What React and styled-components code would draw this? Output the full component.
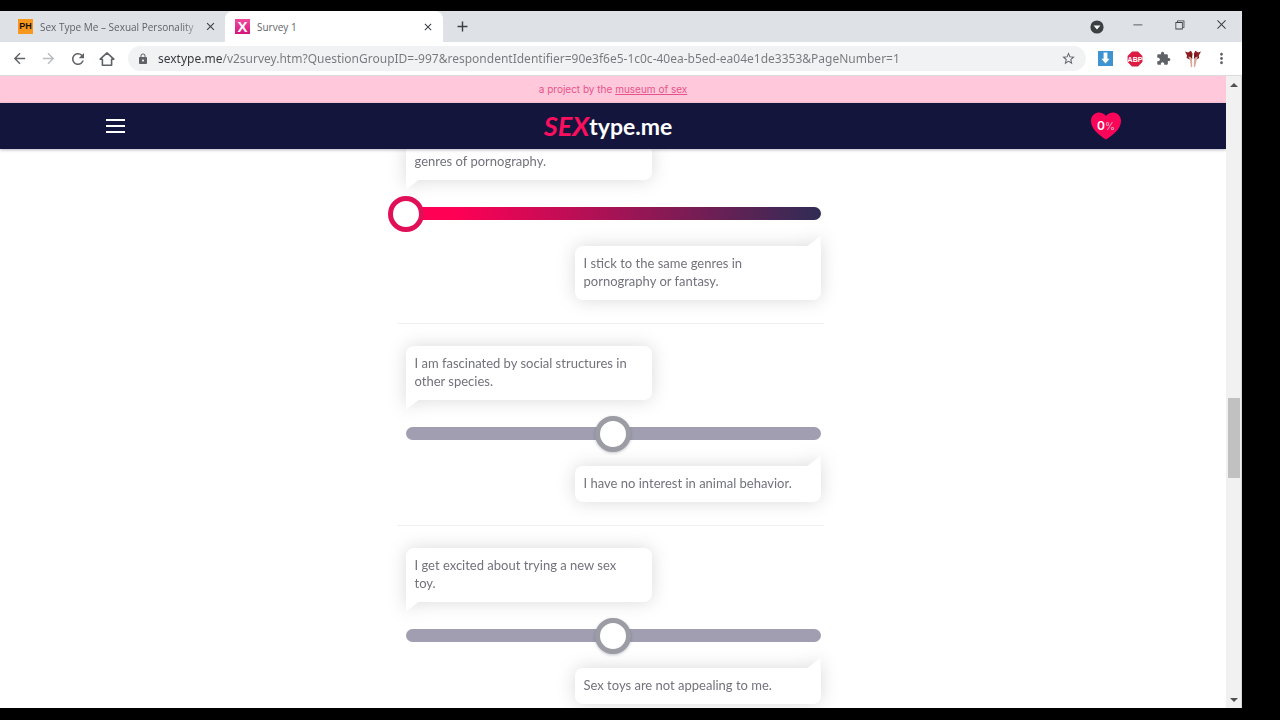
import { useState } from "react";

import styled, { createGlobalStyle } from "styled-components";

import {
    MdAdd,
    MdArrowBack,
    MdArrowForward,
    MdClose,
    MdExtension,
    MdLock,
    MdMoreVert,
    MdRefresh,
    MdStarBorder,
} from "react-icons/md";
import { VscChromeClose, VscChromeMinimize, VscChromeRestore } from "react-icons/vsc";

const pageUrl = "sextype.me/v2survey.htm?QuestionGroupID=-997&respondentIdentifier=90e3f6e5-1c0c-40ea-b5ed-ea04e1de3353&PageNumber=1";

const questions = [
    {
        id: "genres",
        left: "genres of pornography.",
        right: "I stick to the same genres in pornography or fantasy.",
        value: 0,
        answered: true,
    },
    {
        id: "species",
        left: "I am fascinated by social structures in other species.",
        right: "I have no interest in animal behavior.",
        value: 50,
        answered: false,
    },
    {
        id: "toys",
        left: "I get excited about trying a new sex toy.",
        right: "Sex toys are not appealing to me.",
        value: 50,
        answered: false,
    },
];

const HomeIcon = () => (
    <svg width="16" height="16" viewBox="0 0 16 16" fill="none" stroke="#5f6368" strokeWidth="1.6">
        <path d="M1.2 8.2 8 1.8l6.8 6.4H12.6v6H3.4v-6z" strokeLinejoin="round" />
    </svg>
);

const AccountIcon = () => (
    <svg width="14" height="14" viewBox="0 0 14 14">
        <circle cx="7" cy="7" r="6.6" fill="#3c4043" />
        <path d="M3.6 5.4h6.8L7 9.4z" fill="#fff" />
    </svg>
);

const DownloadIcon = () => (
    <svg width="15" height="15" viewBox="0 0 15 15">
        <rect width="15" height="15" fill="#3d94d1" />
        <path d="M5.6 1.5h3.8v6.3h2.2L7.5 12.6 3.4 7.8h2.2z" fill="#fff" />
    </svg>
);

const AdblockIcon = () => (
    <svg width="16" height="16" viewBox="0 0 16 16">
        <path d="M5 .6h6L15.4 5v6L11 15.4H5L.6 11V5z" fill="#dc1b43" />
        <text x="8" y="10.6" textAnchor="middle" fontFamily="Liberation Sans, sans-serif" fontSize="7" fontWeight="700" fill="#fff">ABP</text>
    </svg>
);

const AvatarIcon = () => (
    <svg width="18" height="18" viewBox="0 0 18 18">
        <path d="M1 1.4 4 2.6 7 .8l1.6 3-.6 4-2 1.6L2.6 8 3 5.4z" fill="#8c1d22" />
        <path d="M17 1.6 14 2.4 11.4.8 9.8 3.8l.6 4 2 1.8L15.2 8l-.4-2.6z" fill="#8c1d22" />
        <path d="M4.4 6.6 8 7.6l.2 9.6-1.4-.2-.6-6z" fill="#dba79c" />
        <path d="M13.8 6.6 10.2 7.6l-.4 9 1.2.6 1.4-6z" fill="#dba79c" />
        <path d="M6.6 4.6 8 8.4M11.6 4.6l-1.2 3.8" stroke="#4d1013" />
    </svg>
);

const MenuIcon = () => (
    <svg width="19" height="14" viewBox="0 0 19 14" fill="#fff">
        <rect width="19" height="2" y="0" />
        <rect width="19" height="2" y="6" />
        <rect width="19" height="2" y="12" />
    </svg>
);

const HeartShape = () => (
    <svg width="30" height="28" viewBox="0 0 30 28">
        <path d="M15 27.6C8.500 23.400 0 17.500 0 8.800 0 4 3.400.4 7.800.4c3 0 5.600 1.400 7.200 3.600C16.600 1.800 19.200.4 22.200.4 26.600.4 30 4 30 8.800c0 8.700-8.500 14.600-15 18.800z" fill="#fa0558" />
    </svg>
);

const Question = ({ question }) => {
    const [value, setValue] = useState(question.value);
    const [answered, setAnswered] = useState(question.answered);

    const handleChange = (e) => {
        setValue(Number(e.target.value));
        setAnswered(true);
    };

    return (
        <QuestionItem>
            <Bubble htmlFor={question.id}>{question.left}</Bubble>
            <Track $answered={answered}>
                <Slider
                    id={question.id}
                    type="range"
                    min="0"
                    max="100"
                    value={value}
                    onChange={handleChange}
                    $answered={answered}
                />
            </Track>
            <Bubble htmlFor={question.id} $right>{question.right}</Bubble>
        </QuestionItem>
    );
};

const App = () => {
    const [url, setUrl] = useState(pageUrl);

    return (
        <Desktop>
            <GlobalStyle />
            <Window>
                <TabStrip>
                    <Tab>
                        <Favicon>PH</Favicon>
                        <TabTitle>Sex Type Me – Sexual Personality</TabTitle>
                        <TabButton aria-label="Close tab"><MdClose size={13} /></TabButton>
                    </Tab>
                    <Tab $active>
                        <Favicon $pink>X</Favicon>
                        <TabTitle $active>Survey 1</TabTitle>
                        <TabButton aria-label="Close tab"><MdClose size={12} /></TabButton>
                    </Tab>
                    <NewTab aria-label="New tab"><MdAdd size={17} /></NewTab>
                    <WindowControls>
                        <AccountButton aria-label="Account"><AccountIcon /></AccountButton>
                        <WindowButton aria-label="Minimize"><VscChromeMinimize size={13} /></WindowButton>
                        <WindowButton aria-label="Restore"><VscChromeRestore size={13} /></WindowButton>
                        <WindowButton aria-label="Close"><VscChromeClose size={13} /></WindowButton>
                    </WindowControls>
                </TabStrip>
                <Toolbar>
                    <ToolButton aria-label="Back"><MdArrowBack size={17} /></ToolButton>
                    <ToolButton aria-label="Forward" disabled><MdArrowForward size={17} /></ToolButton>
                    <ToolButton aria-label="Reload"><MdRefresh size={18} /></ToolButton>
                    <ToolButton aria-label="Home"><HomeIcon /></ToolButton>
                    <AddressBar>
                        <MdLock size={12} />
                        <AddressInput
                            aria-label="Address"
                            spellCheck="false"
                            value={url}
                            onChange={(e) => setUrl(e.target.value)}
                        />
                        <ToolButton aria-label="Bookmark"><MdStarBorder size={15} /></ToolButton>
                    </AddressBar>
                    <ToolButton aria-label="Download"><DownloadIcon /></ToolButton>
                    <ToolButton aria-label="Adblock"><AdblockIcon /></ToolButton>
                    <ToolButton aria-label="Extensions"><MdExtension size={15} /></ToolButton>
                    <ToolButton aria-label="Profile"><AvatarIcon /></ToolButton>
                    <ToolButton aria-label="Menu"><MdMoreVert size={17} /></ToolButton>
                </Toolbar>
                <Viewport>
                    <Page>
                        <Banner>
                            a project by the <a href="#museum">museum of sex</a>
                        </Banner>
                        <Header>
                            <MenuButton aria-label="Open menu"><MenuIcon /></MenuButton>
                            <Logo href="#home"><LogoAccent>SEX</LogoAccent>type.me</Logo>
                            <Progress>
                                <HeartShape />
                                <ProgressText>0<small>%</small></ProgressText>
                            </Progress>
                        </Header>
                        <Survey>
                            {questions.map((q) => (
                                <Question key={q.id} question={q} />
                            ))}
                        </Survey>
                    </Page>
                    <Scrollbar>
                        <ScrollArrow aria-label="Scroll up" />
                        <ScrollSpace $grow={305} />
                        <ScrollThumb $grow={80} />
                        <ScrollSpace $grow={213} />
                        <ScrollArrow aria-label="Scroll down" $down />
                    </Scrollbar>
                </Viewport>
            </Window>
        </Desktop>
    );
};

export default App;

const GlobalStyle = createGlobalStyle`
* {
    box-sizing: border-box;
}
body {
    margin: 0;
    background: #000;
    font-family: "Open Sans", "Noto Sans", sans-serif;
}
button {
    display: flex;
    align-items: center;
    justify-content: center;
    padding: 0;
    border: none;
    background: none;
    color: inherit;
    cursor: pointer;
}
svg {
    display: block;
    flex: none;
}
`

const Desktop = styled.div`
height: 100vh;
padding: 11px 38px 12px 0;
background: #000;
`

const Window = styled.div`
display: flex;
flex-direction: column;
height: 100%;
overflow: hidden;
background: #fff;
`

const TabStrip = styled.div`
display: flex;
flex: none;
height: 31px;
background: #dee1e5;
color: #3c4043;
`

const Tab = styled.div`
display: flex;
align-items: center;
width: ${(props) => (props.$active ? "218px" : "225px")};
padding: 0 8px 0 ${(props) => (props.$active ? "10px" : "18px")};
border-radius: 8px 8px 0 0;
background: ${(props) => (props.$active ? "#fff" : "transparent")};
`

const Favicon = styled.span`
flex: none;
width: 15px;
height: 15px;
margin-right: 7px;
background: ${(props) => (props.$pink ? "linear-gradient(#f04c9c, #d4147c)" : "#f7971d")};
color: ${(props) => (props.$pink ? "#fff" : "#1c1208")};
font-family: "Liberation Sans", sans-serif;
font-size: ${(props) => (props.$pink ? "15px" : "9px")};
font-weight: 700;
line-height: 15px;
text-align: center;
`

const TabTitle = styled.span`
flex: 1;
overflow: hidden;
color: #5f6368;
font-size: 10px;
white-space: nowrap;
mask-image: ${(props) => (props.$active ? "none" : "linear-gradient(to right, #000 88%, transparent)")};
`

const TabButton = styled.button`
flex: none;
width: 14px;
height: 14px;
`

const NewTab = styled.button`
width: 38px;
`

const WindowControls = styled.div`
display: flex;
height: 27px;
margin-left: auto;
`

const AccountButton = styled.button`
width: 38px;
height: 31px;
`

const WindowButton = styled.button`
width: 42px;
`

const Toolbar = styled.div`
display: flex;
flex: none;
align-items: center;
height: 34px;
padding: 0 6px 0 5px;
border-bottom: 1px solid #dcd9dc;
background: #fff;
`

const ToolButton = styled.button`
flex: none;
width: 29px;
height: 25px;
color: #5f6368;
&:disabled{
    color: #b9bcc0;
}
`

const AddressBar = styled.div`
display: flex;
flex: 1;
align-items: center;
height: 25px;
margin: 0 5px 0 7px;
padding: 0 3px 0 9px;
border-radius: 13px;
background: #f0f2f4;
color: #5f6368;
`

/* host name is darker than the rest of the address */
const AddressInput = styled.input`
flex: 1;
min-width: 0;
margin-left: 9px;
padding: 0;
border: none;
outline: none;
background: linear-gradient(to right, #34363a 64px, #75787c 64px);
background-clip: text;
color: transparent;
caret-color: #34363a;
font-family: "Noto Sans", "Open Sans", sans-serif;
font-size: 12px;
line-height: 20px;
`

const Viewport = styled.div`
display: flex;
flex: 1;
min-height: 0;
`

const Page = styled.main`
flex: 1;
overflow: hidden;
background: #fff;
font-family: Lato, Inter, sans-serif;
`

const Banner = styled.div`
position: relative;
z-index: 1;
height: 27px;
background: #ffc9db;
color: #e8528a;
font-family: Inter, sans-serif;
font-size: 10px;
line-height: 26px;
text-align: center;
a{
    color: inherit;
}
`

const Header = styled.header`
position: relative;
z-index: 1;
display: flex;
align-items: center;
justify-content: space-between;
height: 46px;
padding: 0 105px 0 106px;
background: #14153d;
box-shadow: 0 1px 3px rgba(20, 21, 61, 0.3);
`

const MenuButton = styled.button`
width: 19px;
height: 20px;
`

const Logo = styled.a`
display: flex;
align-items: center;
color: #fff;
font-family: Lato, sans-serif;
font-size: 23px;
font-weight: 700;
line-height: 28px;
text-decoration: none;
`

const LogoAccent = styled.span`
color: #fa0f5f;
font-size: 27px;
font-style: italic;
`

const Progress = styled.div`
position: relative;
`

const ProgressText = styled.span`
position: absolute;
inset: 0;
color: #fff;
font-family: Inter, sans-serif;
font-size: 12px;
font-weight: 600;
line-height: 28px;
text-align: center;
small{
    color: #d9a3bd;
    font-size: 10px;
}
`

const Survey = styled.div`
width: 415px;
max-width: 100%;
margin: -27px auto 0;
`

const QuestionItem = styled.section`
display: flex;
flex-direction: column;
align-items: flex-start;
margin: 0 -3px 0 -9px;
padding: 22px 3px 23px 9px;
border-bottom: 1px solid #f0f0f2;
`

const Bubble = styled.label`
position: relative;
align-self: ${(props) => (props.$right ? "flex-end" : "flex-start")};
width: 246px;
padding: 8px 16px 10px 9px;
border-radius: ${(props) => (props.$right ? "8px 0 8px 8px" : "8px 8px 8px 0")};
background: #fff;
color: #72727c;
font-size: 13px;
line-height: 18px;
filter: drop-shadow(0 0 9px rgba(0, 0, 0, 0.15));
&::after{
    content: "";
    position: absolute;
    ${(props) => (props.$right ? "right: 0; bottom: 100%;" : "left: 0; top: 100%;")}
    width: 13px;
    height: 10px;
    background: #fff;
    clip-path: ${(props) => (props.$right ? "polygon(100% 0, 100% 100%, 0 100%)" : "polygon(0 0, 100% 0, 0 100%)")};
}
`

const Track = styled.div`
position: relative;
display: flex;
align-items: center;
align-self: stretch;
height: 13px;
margin: 27px 0 26px;
border-radius: 7px;
background: ${(props) => (props.$answered ? "linear-gradient(to right, #ff0055 12%, #2f2c55)" : "#a09eb0")};
`

const Slider = styled.input`
flex: none;
width: calc(100% + 36px);
height: 36px;
margin: 0 -18px;
appearance: none;
background: transparent;
cursor: pointer;
&::-webkit-slider-thumb{
    appearance: none;
    width: 36px;
    height: 36px;
    border: 5px solid ${(props) => (props.$answered ? "#e00f57" : "#9c9ca4")};
    border-radius: 50%;
    background: #fff;
    box-shadow: ${(props) => (props.$answered ? "none" : "0 1px 3px rgba(60, 60, 90, 0.3)")};
}
`

const Scrollbar = styled.div`
display: flex;
flex: none;
flex-direction: column;
align-items: center;
width: 16px;
border-right: 1px solid #d5d5d5;
background: #f1f1f1;
`

const ScrollArrow = styled.button`
width: 15px;
height: 17px;
&::after{
    content: "";
    border: 4px solid transparent;
    ${(props) => (props.$down ? "border-top-color: #505050; border-bottom: none;" : "border-bottom-color: #505050; border-top: none;")}
}
`

const ScrollSpace = styled.div`
flex: ${(props) => props.$grow} 0 0;
`

const ScrollThumb = styled.div`
flex: ${(props) => props.$grow} 0 0;
width: 12px;
background: #c1c1c1;
`
